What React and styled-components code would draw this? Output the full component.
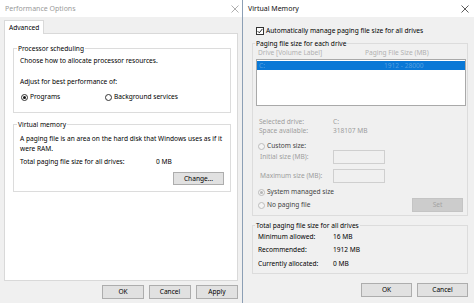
import styled, { createGlobalStyle } from "styled-components";

const GlobalStyle = createGlobalStyle`
  html, body {
    margin: 0;
    padding: 0;
  }
  body {
    font-family: "Noto Sans", "DejaVu Sans", sans-serif;
    font-size: 6.6px;
    line-height: 10px;
    color: #000;
    background: #f0f0f0;
  }
`;

const Screen = styled.div`
  display: flex;
  width: 474px;
  height: 303px;
  overflow: hidden;
`;

const Window = styled.div`
  display: flex;
  flex-direction: column;
  flex-shrink: 0;
  width: ${(p) => p.$width}px;
  height: 100%;
  box-sizing: border-box;
  background: #f0f0f0;
  border-left: ${(p) => (p.$active ? "1px solid #8c9fb5" : "none")};
`;

const TitleBar = styled.div`
  height: 17px;
  flex-shrink: 0;
  display: flex;
  align-items: center;
  justify-content: space-between;
  padding: 0 ${(p) => p.$right}px 0 ${(p) => p.$left}px;
  background: #fff;
  font-size: 7px;
  color: ${(p) => (p.$active ? "#111" : "#9a9a9a")};
`;

const LeftBody = styled.div`
  flex: 1;
  display: flex;
  flex-direction: column;
  padding: 3px 4px 0;
`;

const RightBody = styled.div`
  flex: 1;
  display: flex;
  flex-direction: column;
  padding: 9px 6px 0 9px;
`;

const Tab = styled.div`
  align-self: flex-start;
  position: relative;
  z-index: 1;
  height: 13px;
  margin-bottom: -1px;
  padding: 0 4px;
  line-height: 13px;
  background: #fff;
  border: 1px solid #d9d9d9;
  border-bottom: none;
`;

const TabPanel = styled.div`
  height: 248px;
  box-sizing: border-box;
  display: flex;
  flex-direction: column;
  padding: 14px 6px 0 8px;
  background: #fff;
  border: 1px solid #d9d9d9;
`;

const Group = styled.div`
  display: flex;
  flex-direction: column;
  margin-top: ${(p) => p.$mt || 0}px;
  padding: 0 ${(p) => p.$pr}px ${(p) => p.$pb}px ${(p) => p.$pl}px;
  border: 1px solid #dcdcdc;
`;

const GroupTitle = styled.div`
  align-self: flex-start;
  margin: -5px 0 0 ${(p) => p.$ml}px;
  padding: 0 1px;
  background: ${(p) => p.$bg};
`;

const Text = styled.div`
  margin-top: ${(p) => p.$mt || 0}px;
  padding-left: ${(p) => p.$pl || 0}px;
  line-height: ${(p) => p.$lh || 10}px;
  color: ${(p) => (p.$muted ? "#9d9d9d" : "inherit")};
`;

const Row = styled.div`
  display: flex;
  align-items: center;
  margin-top: ${(p) => p.$mt || 0}px;
  padding-left: ${(p) => p.$pl || 0}px;
  height: ${(p) => (p.$h ? `${p.$h}px` : "auto")};
  line-height: ${(p) => p.$lh || 10}px;
  color: ${(p) => (p.$muted ? "#9d9d9d" : "inherit")};
`;

const Label = styled.span`
  width: ${(p) => p.$w}px;
  flex-shrink: 0;
`;

const Option = styled.label`
  display: flex;
  align-items: center;
  gap: 2px;
  width: ${(p) => (p.$w ? `${p.$w}px` : "auto")};
  color: ${(p) => p.$color || "inherit"};
`;

const RadioCircle = styled.span`
  width: 7px;
  height: 7px;
  box-sizing: border-box;
  flex-shrink: 0;
  display: flex;
  align-items: center;
  justify-content: center;
  border-radius: 50%;
  border: 1px solid ${(p) => (p.$disabled ? "#bcbcbc" : "#333")};
  background: ${(p) => (p.$disabled ? "#f4f4f4" : "#fff")};
  &::after {
    content: "";
    display: ${(p) => (p.$checked ? "block" : "none")};
    width: 3px;
    height: 3px;
    border-radius: 50%;
    background: ${(p) => (p.$disabled ? "#b5b5b5" : "#111")};
  }
`;

const CheckBox = styled.span`
  width: 8px;
  height: 8px;
  box-sizing: border-box;
  flex-shrink: 0;
  display: flex;
  align-items: center;
  justify-content: center;
  border: 1px solid #333;
  background: #fff;
`;

const Button = styled.button`
  width: ${(p) => p.$w}px;
  height: ${(p) => p.$h || 14}px;
  flex-shrink: 0;
  align-self: ${(p) => p.$align || "auto"};
  margin-top: ${(p) => p.$mt || 0}px;
  margin-left: ${(p) => (p.$push ? "auto" : "0")};
  margin-right: ${(p) => p.$mr || 0}px;
  padding: 0;
  box-sizing: border-box;
  font: inherit;
  line-height: 10px;
  color: ${(p) => (p.disabled ? "#a3a3a3" : "#000")};
  background: ${(p) => (p.disabled ? "#cccccc" : "#e1e1e1")};
  border: 1px solid ${(p) => (p.disabled ? "#c4c4c4" : "#adadad")};
`;

const Footer = styled.div`
  display: flex;
  justify-content: flex-end;
  gap: ${(p) => p.$gap}px;
  margin-top: ${(p) => p.$mt}px;
  padding-right: ${(p) => p.$pr || 0}px;
`;

const ColumnHeader = styled.div`
  display: flex;
  margin-top: -1px;
  padding-left: 2px;
  line-height: 10px;
  color: #b0b0b0;
`;

const ListBox = styled.div`
  height: 47px;
  box-sizing: border-box;
  margin: 1px 1px 0 0;
  padding: 1px 0 0;
  background: #fff;
  border: 1px solid #a9a9a9;
`;

const ListRowSelected = styled.div`
  display: flex;
  height: 9px;
  line-height: 9px;
  padding-left: 2px;
  background: #0a78d6;
  color: rgba(255, 255, 255, 0.3);
`;

const SizeInput = styled.div`
  width: 52px;
  height: 14px;
  box-sizing: border-box;
  background: #f0f0f0;
  border: 1px solid #cfcfcf;
`;

function CloseIcon({ color }) {
  return (
    <svg width="8" height="8" viewBox="0 0 8 8">
      <path d="M0.5 0.5 L7.5 7.5 M7.5 0.5 L0.5 7.5" stroke={color} strokeWidth="0.8" fill="none" />
    </svg>
  );
}

function Radio({ checked, disabled, children, w, color }) {
  return (
    <Option $w={w} $color={color}>
      <RadioCircle $checked={checked} $disabled={disabled} />
      {children}
    </Option>
  );
}

function PerformanceOptions() {
  return (
    <Window $width={242}>
      <TitleBar $left={5} $right={3}>
        <span>Performance Options</span>
        <CloseIcon color="#9a9a9a" />
      </TitleBar>
      <LeftBody>
        <Tab>Advanced</Tab>
        <TabPanel>
          <Group $pl={6} $pr={6} $pb={10}>
            <GroupTitle $ml={-3} $bg="#fff">Processor scheduling</GroupTitle>
            <Text $mt={2}>Choose how to allocate processor resources.</Text>
            <Text $mt={11}>Adjust for best performance of:</Text>
            <Row $mt={5} $pl={1}>
              <Radio checked w={84}>Programs</Radio>
              <Radio>Background services</Radio>
            </Row>
          </Group>
          <Group $mt={11} $pl={6} $pr={6} $pb={6}>
            <GroupTitle $ml={-3} $bg="#fff">Virtual memory</GroupTitle>
            <Text $mt={4}>
              A paging file is an area on the hard disk that Windows uses as if it
              <br />
              were RAM.
            </Text>
            <Row $mt={3}>
              <Label $w={136}>Total paging file size for all drives:</Label>
              <span>0 MB</span>
            </Row>
            <Button $w={51} $h={13} $mt={5} $align="flex-end">
              Change...
            </Button>
          </Group>
        </TabPanel>
        <Footer $gap={5} $mt={4}>
          <Button $w={42}>OK</Button>
          <Button $w={42}>Cancel</Button>
          <Button $w={42}>Apply</Button>
        </Footer>
      </LeftBody>
    </Window>
  );
}

function VirtualMemory() {
  return (
    <Window $width={232} $active>
      <TitleBar $left={5} $right={5} $active>
        <span>Virtual Memory</span>
        <CloseIcon color="#333" />
      </TitleBar>
      <RightBody>
        <Row $pl={4}>
          <Option>
            <CheckBox>
              <svg width="6" height="6" viewBox="0 0 6 6">
                <path d="M0.6 3.1 L2.3 4.8 L5.4 0.9" stroke="#111" strokeWidth="0.9" fill="none" />
              </svg>
            </CheckBox>
            Automatically manage paging file size for all drives
          </Option>
        </Row>

        <Group $mt={7} $pl={3} $pr={0} $pb={3}>
          <GroupTitle $ml={-1} $bg="#f0f0f0">Paging file size for each drive</GroupTitle>
          <ColumnHeader>
            <Label $w={107}>Drive  [Volume Label]</Label>
            <span>Paging File Size (MB)</span>
          </ColumnHeader>
          <ListBox>
            <ListRowSelected>
              <Label $w={125}>C:</Label>
              <span>1912 - 28000</span>
            </ListRowSelected>
          </ListBox>
          <Row $mt={11} $pl={3} $lh={9} $muted>
            <Label $w={74}>Selected drive:</Label>
            <span>C:</span>
          </Row>
          <Row $pl={3} $lh={9} $muted>
            <Label $w={74}>Space available:</Label>
            <span>318107 MB</span>
          </Row>
          <Row $mt={7} $pl={2} $lh={8}>
            <Radio disabled color="#444">Custom size:</Radio>
          </Row>
          <Row $h={14} $pl={4} $muted>
            <Label $w={73}>Initial size (MB):</Label>
            <SizeInput />
          </Row>
          <Row $mt={5} $h={14} $pl={4} $muted>
            <Label $w={73}>Maximum size (MB):</Label>
            <SizeInput />
          </Row>
          <Row $mt={4} $pl={2}>
            <Radio checked disabled color="#444">System managed size</Radio>
          </Row>
          <Row $mt={1} $h={14} $pl={2}>
            <Radio disabled color="#444">No paging file</Radio>
            <Button $w={51} $push $mr={4} disabled>
              Set
            </Button>
          </Row>
        </Group>

        <Group $mt={9} $pl={3} $pr={0} $pb={4}>
          <GroupTitle $ml={-1} $bg="#f0f0f0">Total paging file size for all drives</GroupTitle>
          <Row $mt={1} $pl={2}>
            <Label $w={75}>Minimum allowed:</Label>
            <span>16 MB</span>
          </Row>
          <Row $mt={3} $pl={2}>
            <Label $w={75}>Recommended:</Label>
            <span>1912 MB</span>
          </Row>
          <Row $mt={4} $pl={2}>
            <Label $w={75}>Currently allocated:</Label>
            <span>0 MB</span>
          </Row>
        </Group>

        <Footer $gap={5} $mt={9} $pr={0}>
          <Button $w={51}>OK</Button>
          <Button $w={51}>Cancel</Button>
        </Footer>
      </RightBody>
    </Window>
  );
}

export default function App() {
  return (
    <>
      <GlobalStyle />
      <Screen>
        <PerformanceOptions />
        <VirtualMemory />
      </Screen>
    </>
  );
}
